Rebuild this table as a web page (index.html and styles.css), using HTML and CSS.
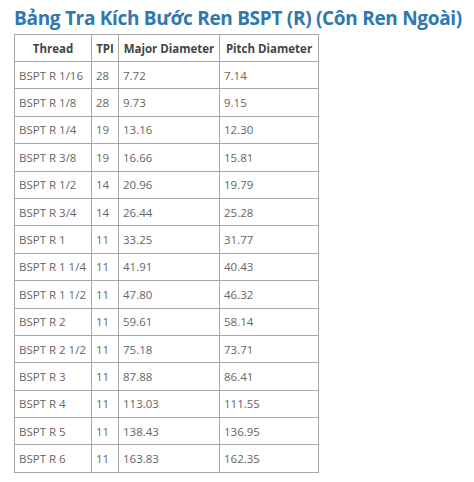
FILE: index.html
```html
<!DOCTYPE html>
<html>
<head>
<meta charset="utf-8">
<link rel="stylesheet" href="styles.css">
</head>
<body>
<h2 class="title">Bảng Tra Kích Bước Ren BSPT (R) (Côn Ren Ngoài)</h2>
<table class="tbl">
<thead>
<tr><th class="c1">Thread</th><th class="c2">TPI</th><th class="c3">Major Diameter</th><th class="c4">Pitch Diameter</th></tr>
</thead>
<tbody>
<tr><td>BSPT R 1/16</td><td>28</td><td>7.72</td><td>7.14</td></tr>
<tr><td>BSPT R 1/8</td><td>28</td><td>9.73</td><td>9.15</td></tr>
<tr><td>BSPT R 1/4</td><td>19</td><td>13.16</td><td>12.30</td></tr>
<tr><td>BSPT R 3/8</td><td>19</td><td>16.66</td><td>15.81</td></tr>
<tr><td>BSPT R 1/2</td><td>14</td><td>20.96</td><td>19.79</td></tr>
<tr><td>BSPT R 3/4</td><td>14</td><td>26.44</td><td>25.28</td></tr>
<tr><td>BSPT R 1</td><td>11</td><td>33.25</td><td>31.77</td></tr>
<tr><td>BSPT R 1 1/4</td><td>11</td><td>41.91</td><td>40.43</td></tr>
<tr><td>BSPT R 1 1/2</td><td>11</td><td>47.80</td><td>46.32</td></tr>
<tr><td>BSPT R 2</td><td>11</td><td>59.61</td><td>58.14</td></tr>
<tr><td>BSPT R 2 1/2</td><td>11</td><td>75.18</td><td>73.71</td></tr>
<tr><td>BSPT R 3</td><td>11</td><td>87.88</td><td>86.41</td></tr>
<tr><td>BSPT R 4</td><td>11</td><td>113.03</td><td>111.55</td></tr>
<tr><td>BSPT R 5</td><td>11</td><td>138.43</td><td>136.95</td></tr>
<tr><td>BSPT R 6</td><td>11</td><td>163.83</td><td>162.35</td></tr>
</tbody>
</table>
</body>
</html>
```
FILE: styles.css
```css
body {
  margin: 0;
  padding: 8px 14px;
  background: #fff;
  font-family: "Open Sans", "DejaVu Sans", sans-serif;
}
.title {
  margin: 0 0 6px 0;
  font-size: 19px;
  line-height: 20px;
  font-weight: 700;
  letter-spacing: -0.3px;
  color: #2e78ae;
  white-space: nowrap;
}
.tbl {
  border-collapse: collapse;
  width: 304px;
  table-layout: fixed;
}
.tbl th, .tbl td {
  box-sizing: border-box;
  border: 1px solid #a8a8a8;
  padding: 0 4px;
  font-size: 11.5px;
  white-space: nowrap;
  overflow: hidden;
}
.tbl th {
  height: 27px;
  padding: 0 2px;
  color: #444;
  font-weight: 700;
  text-align: center;
}
.tbl td {
  height: 27.4px;
  color: #666;
  text-align: left;
}
.c1 { width: 77px; }
.c2 { width: 27px; }
.c3 { width: 101px; }
.c4 { width: 99px; }
```
